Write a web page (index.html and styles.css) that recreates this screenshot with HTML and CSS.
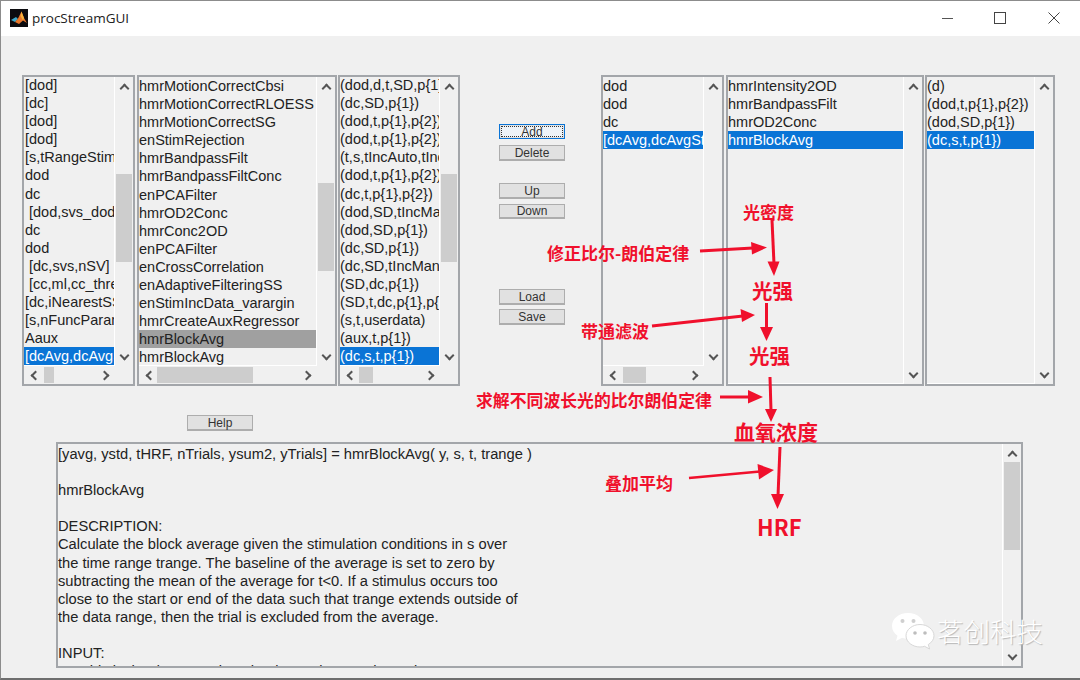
FILE: index.html
```html
<!DOCTYPE html>
<html lang="en">
<head>
    <meta charset="UTF-8">
    <title>procStreamGUI</title>
    <link rel="stylesheet" href="styles.css">
</head>
<body>
    <div class="window">
        <div class="titlebar">
            <svg class="app-icon" width="18" height="18" viewBox="0 0 18 18">
                <rect width="18" height="18" fill="#0b0b0f"/>
                <path d="M1 11 L6 8 L8 10 L5 13 Z" fill="#3fa7c9"/>
                <path d="M5 13 L8 9.5 L11.5 2.5 L14 9 L17 14 L13 11.5 L9 15 Z" fill="#e8762a"/>
                <path d="M11.5 2.5 L14 9 L13 11.5 L10.5 7 Z" fill="#f6b13c"/>
            </svg>
            <span class="title-text">procStreamGUI</span>
            <div class="window-controls">
                <span class="win-btn"><span class="win-min"></span></span>
                <span class="win-btn win-btn-mid"><span class="win-max"></span></span>
                <span class="win-btn">
                    <svg width="12" height="12" viewBox="0 0 12 12"><path d="M0.5 0.5 L11.5 11.5 M11.5 0.5 L0.5 11.5" stroke="#444" stroke-width="1" fill="none"/></svg>
                </span>
            </div>
        </div>

        <div class="content">
            <div class="top-row">
                <div class="listbox list-a">
                    <div class="items items-high">
                        <div>[dod]</div>
                        <div>[dc]</div>
                        <div>[dod]</div>
                        <div>[dod]</div>
                        <div>[s,tRangeStimReject]</div>
                        <div>dod</div>
                        <div>dc</div>
                        <div> [dod,svs_dod,nSV]</div>
                        <div>dc</div>
                        <div>dod</div>
                        <div> [dc,svs,nSV]</div>
                        <div> [cc,ml,cc_thresh]</div>
                        <div>[dc,iNearestSS]</div>
                        <div>[s,nFuncParam0]</div>
                        <div>Aaux</div>
                        <div class="selected">[dcAvg,dcAvgStd,tHRF]</div>
                    </div>
                    <div class="vscroll">
                        <span class="arrow-btn"><i class="arrow up"></i></span>
                        <div class="track"><div class="thumb thumb-a"></div></div>
                        <span class="arrow-btn"><i class="arrow down"></i></span>
                    </div>
                    <div class="hscroll">
                        <span class="arrow-btn"><i class="arrow left"></i></span>
                        <div class="track"><div class="thumb hthumb-a"></div></div>
                        <span class="arrow-btn"><i class="arrow right"></i></span>
                    </div>
                </div>

                <div class="listbox list-b">
                    <div class="items">
                        <div>hmrMotionCorrectCbsi</div>
                        <div>hmrMotionCorrectRLOESS</div>
                        <div>hmrMotionCorrectSG</div>
                        <div>enStimRejection</div>
                        <div>hmrBandpassFilt</div>
                        <div>hmrBandpassFiltConc</div>
                        <div>enPCAFilter</div>
                        <div>hmrOD2Conc</div>
                        <div>hmrConc2OD</div>
                        <div>enPCAFilter</div>
                        <div>enCrossCorrelation</div>
                        <div>enAdaptiveFilteringSS</div>
                        <div>enStimIncData_varargin</div>
                        <div>hmrCreateAuxRegressor</div>
                        <div class="inactive">hmrBlockAvg</div>
                        <div>hmrBlockAvg</div>
                    </div>
                    <div class="vscroll">
                        <span class="arrow-btn"><i class="arrow up"></i></span>
                        <div class="track"><div class="thumb thumb-b"></div></div>
                        <span class="arrow-btn"><i class="arrow down"></i></span>
                    </div>
                    <div class="hscroll">
                        <span class="arrow-btn"><i class="arrow left"></i></span>
                        <div class="track"><div class="thumb hthumb-b"></div></div>
                        <span class="arrow-btn"><i class="arrow right"></i></span>
                    </div>
                </div>

                <div class="listbox list-c">
                    <div class="items items-high">
                        <div>(dod,d,t,SD,p{1},p{2})</div>
                        <div>(dc,SD,p{1})</div>
                        <div>(dod,t,p{1},p{2})</div>
                        <div>(dod,t,p{1},p{2})</div>
                        <div>(t,s,tIncAuto,tIncMan)</div>
                        <div>(dod,t,p{1},p{2})</div>
                        <div>(dc,t,p{1},p{2})</div>
                        <div>(dod,SD,tIncMan,p{1})</div>
                        <div>(dod,SD,p{1})</div>
                        <div>(dc,SD,p{1})</div>
                        <div>(dc,SD,tIncMan,p{1})</div>
                        <div>(SD,dc,p{1})</div>
                        <div>(SD,t,dc,p{1},p{2})</div>
                        <div>(s,t,userdata)</div>
                        <div>(aux,t,p{1})</div>
                        <div class="selected">(dc,s,t,p{1})</div>
                    </div>
                    <div class="vscroll">
                        <span class="arrow-btn"><i class="arrow up"></i></span>
                        <div class="track"><div class="thumb thumb-a"></div></div>
                        <span class="arrow-btn"><i class="arrow down"></i></span>
                    </div>
                    <div class="hscroll">
                        <span class="arrow-btn"><i class="arrow left"></i></span>
                        <div class="track"><div class="thumb hthumb-c"></div></div>
                        <span class="arrow-btn"><i class="arrow right"></i></span>
                    </div>
                </div>

                <div class="button-col">
                    <button class="btn btn-add"><span>Add</span></button>
                    <button class="btn btn-delete">Delete</button>
                    <button class="btn btn-up">Up</button>
                    <button class="btn btn-down">Down</button>
                    <button class="btn btn-load">Load</button>
                    <button class="btn btn-save">Save</button>
                </div>

                <div class="listbox list-d">
                    <div class="items">
                        <div>dod</div>
                        <div>dod</div>
                        <div>dc</div>
                        <div class="selected">[dcAvg,dcAvgStd,tHRF]</div>
                    </div>
                    <div class="vscroll">
                        <span class="arrow-btn"><i class="arrow up"></i></span>
                        <div class="track"></div>
                        <span class="arrow-btn"><i class="arrow down"></i></span>
                    </div>
                    <div class="hscroll">
                        <span class="arrow-btn"><i class="arrow left"></i></span>
                        <div class="track"><div class="thumb hthumb-d"></div></div>
                        <span class="arrow-btn"><i class="arrow right"></i></span>
                    </div>
                </div>

                <div class="listbox list-e no-hscroll">
                    <div class="items">
                        <div>hmrIntensity2OD</div>
                        <div>hmrBandpassFilt</div>
                        <div>hmrOD2Conc</div>
                        <div class="selected">hmrBlockAvg</div>
                    </div>
                    <div class="vscroll">
                        <span class="arrow-btn"><i class="arrow up"></i></span>
                        <div class="track"></div>
                        <span class="arrow-btn"><i class="arrow down"></i></span>
                    </div>
                </div>

                <div class="listbox list-f no-hscroll">
                    <div class="items">
                        <div>(d)</div>
                        <div>(dod,t,p{1},p{2})</div>
                        <div>(dod,SD,p{1})</div>
                        <div class="selected">(dc,s,t,p{1})</div>
                    </div>
                    <div class="vscroll">
                        <span class="arrow-btn"><i class="arrow up"></i></span>
                        <div class="track"></div>
                        <span class="arrow-btn"><i class="arrow down"></i></span>
                    </div>
                </div>
            </div>

            <button class="btn btn-help">Help</button>

            <div class="helptext">
                <div class="helptext-body">[yavg, ystd, tHRF, nTrials, ysum2, yTrials] = hmrBlockAvg( y, s, t, trange )

hmrBlockAvg

DESCRIPTION:
Calculate the block average given the stimulation conditions in s over
the time range trange. The baseline of the average is set to zero by
subtracting the mean of the average for t&lt;0. If a stimulus occurs too
close to the start or end of the data such that trange extends outside of
the data range, then the trial is excluded from the average.

INPUT:
   y: this is the data wavelength #time points x #channels</div>
                <div class="vscroll">
                    <span class="arrow-btn"><i class="arrow up"></i></span>
                    <div class="track"><div class="thumb thumb-help"></div></div>
                    <span class="arrow-btn"><i class="arrow down"></i></span>
                </div>
            </div>
        </div>

        <!-- red notes pasted over the screenshot -->
        <svg class="arrows" width="1080" height="680" viewBox="0 0 1080 680">
            <g stroke="#f0102c" stroke-width="3" fill="#f0102c">
                <path d="M772 220 L774 264"/>
                <path d="M700 251 L753 248"/>
                <path d="M766.5 303 L766.5 329"/>
                <path d="M652 326 L743 316"/>
                <path d="M770 377 L771 411"/>
                <path d="M720 397 L750 397"/>
                <path d="M780 447 L778 496"/>
                <path d="M689 478 L760 471.5" stroke-width="2.5"/>
            </g>
            <g fill="#f0102c">
                <path d="M774 276 L767.5 261.5 L779.5 261.5 Z"/>
                <path d="M767 247.5 L751 242 L752 254.5 Z"/>
                <path d="M766.5 341 L760 327 L773 327 Z"/>
                <path d="M755 315 L740.5 309 L742 322 Z"/>
                <path d="M771 422 L765 409 L777 409 Z"/>
                <path d="M763 397 L748 390 L748 403.5 Z"/>
                <path d="M777.5 509 L771 494 L784 494 Z"/>
                <path d="M774 470 L757.5 464 L759 479.5 Z"/>
            </g>
        </svg>
        <span class="note note-s" id="note-od" lang="zh">光密度</span>
        <span class="note note-s" id="note-mbll" lang="zh">修正比尔-朗伯定律</span>
        <span class="note note-l" id="note-i1" lang="zh">光强</span>
        <span class="note note-s" id="note-bp" lang="zh">带通滤波</span>
        <span class="note note-l" id="note-i2" lang="zh">光强</span>
        <span class="note note-s" id="note-solve" lang="zh">求解不同波长光的比尔朗伯定律</span>
        <span class="note note-l" id="note-conc" lang="zh">血氧浓度</span>
        <span class="note note-s" id="note-avg" lang="zh">叠加平均</span>
        <span class="note note-l" id="note-hrf">HRF</span>

        <div class="watermark">
            <svg width="44" height="38" viewBox="0 0 44 38">
                <path d="M17 1 C7.5 1 1 7 1 14 C1 18 3.2 21.5 6.5 23.8 L5 29 L11 25.8 C13 26.4 15 26.7 17 26.7 C26.5 26.7 33 20.8 33 14 C33 7 26.5 1 17 1 Z" fill="#fff"/>
                <path d="M29 12.5 C21.5 12.5 15 17.6 15 23.8 C15 30 21.5 35 29 35 C30.6 35 32.2 34.7 33.6 34.3 L38.6 37 L37.3 32.5 C40.8 30.4 43 27.3 43 23.8 C43 17.6 36.5 12.5 29 12.5 Z" fill="#fff" stroke="#d8d8d8" stroke-width="1"/>
                <circle cx="11.5" cy="9" r="2" fill="#cfcfcf"/>
                <circle cx="22.5" cy="9" r="2" fill="#cfcfcf"/>
                <circle cx="24" cy="21" r="1.8" fill="#bdbdbd"/>
                <circle cx="34" cy="21" r="1.8" fill="#bdbdbd"/>
            </svg>
            <span class="watermark-text" lang="zh">茗创科技</span>
        </div>
    </div>
</body>
</html>
```

FILE: styles.css
```css
* {
    box-sizing: border-box;
}
body {
    margin: 0;
    background-color: #f0f0f0;
    font-family: 'Liberation Sans', Arial, sans-serif;
}
.window {
    position: relative;
    width: 1080px;
    height: 680px;
    overflow: hidden;
    display: flex;
    flex-direction: column;
    background-color: #f0f0f0;
    border-top: 1px solid #8c8c8c;
    border-left: 1px solid #8c8c8c;
    border-bottom: 2px solid #6e6e6e;
}

/* title bar */
.titlebar {
    height: 35px;
    flex: none;
    display: flex;
    align-items: center;
    background-color: #fff;
    padding: 0 0 1px 9px;
}
.app-icon {
    flex: none;
}
.title-text {
    margin-left: 4px;
    font-family: 'Open Sans', 'Noto Sans', sans-serif;
    font-size: 13.5px;
    color: #222;
}
.window-controls {
    margin-left: auto;
    display: flex;
}
.win-btn {
    width: 52px;
    height: 34px;
    display: flex;
    align-items: center;
    justify-content: center;
}
.win-btn-mid {
    margin-right: 2.5px;
}
.win-min {
    width: 11px;
    height: 1px;
    background-color: #555;
}
.win-max {
    width: 12px;
    height: 12px;
    border: 1px solid #444;
}

/* page content */
.content {
    flex: 1;
    padding: 39px 0 0 21px;
}
.top-row {
    display: flex;
    height: 311px;
}

/* list boxes */
.listbox {
    display: grid;
    grid-template-columns: 1fr 18px;
    grid-template-rows: 1fr 18px;
    border: 2px solid #a3a6aa;
    font-size: 14.5px;
    color: #222;
}
.no-hscroll {
    grid-template-rows: 1fr;
}
.list-a { width: 113px; margin-right: 2px; }
.list-b { width: 200px; margin-right: 1px; }
.list-c { width: 122px; }
.list-d { width: 123px; margin-right: 2px; }
.list-e { width: 198px; margin-right: 1px; }
.list-f { width: 130px; }
.items {
    overflow: hidden;
    min-width: 0;
    border-right: 1px solid #fff;
    border-bottom: 1px solid #fff;
}
.items div {
    height: 18.1px;
    line-height: 18px;
    white-space: pre;
}
.list-a .items div {
    padding-left: 1px;
}
.items-high div:first-child {
    margin-top: -1px;
}
.selected {
    background-color: #0a74d6;
    color: #fff;
}
.items .inactive {
    background-color: #a0a0a0;
}

/* scroll bars */
.vscroll {
    display: flex;
    flex-direction: column;
    min-height: 0;
    overflow: hidden;
}
.hscroll {
    display: flex;
    min-width: 0;
}
.track {
    flex: 1;
    padding: 0 1px;
}
.hscroll .track {
    padding: 1px 0;
}
.arrow-btn {
    flex: none;
    width: 18px;
    height: 18px;
    display: flex;
    align-items: center;
    justify-content: center;
}
.arrow {
    display: block;
    width: 7px;
    height: 7px;
    border-top: 2px solid #555;
    border-left: 2px solid #555;
}
.arrow.up { transform: translateY(2px) rotate(45deg); }
.arrow.down { transform: translateY(-2px) rotate(225deg); }
.arrow.left { transform: translateX(2px) rotate(-45deg); }
.arrow.right { transform: translateX(-2px) rotate(135deg); }
.thumb {
    background-color: #cdcdcd;
}
.thumb-a { height: 88px; margin-top: 79px; }
.thumb-b { height: 88px; margin-top: 88px; }
.hscroll .thumb { height: 16px; }
.hthumb-a { width: 10px; margin-left: 2px; }
.hthumb-b { width: 96px; }
.hthumb-c { width: 14px; margin-left: 1px; }
.hthumb-d { width: 23px; margin-left: 2px; }
.thumb-help { height: 88px; margin-top: 0; }

/* push buttons */
.button-col {
    width: 67px;
    margin: 0 35px 0 39px;
    display: flex;
    flex-direction: column;
    padding-top: 49px;
}
.btn {
    display: block;
    width: 66px;
    height: 16px;
    padding: 1px 0 0;
    background-color: #e1e1e1;
    border: 1px solid #adadad;
    border-bottom-width: 2px;
    font-family: 'Liberation Sans', Arial, sans-serif;
    font-size: 12px;
    line-height: 13px;
    color: #333;
}
.btn-add {
    height: 15px;
    border: 1px solid #0a74d6;
    padding: 1px;
}
.btn-add span {
    display: block;
    height: 11px;
    line-height: 10px;
    border: 1px dotted #333;
    background-color: #eef3f8;
}
.btn-delete { margin-top: 6px; }
.btn-up { margin-top: 22px; }
.btn-down { margin-top: 5px; height: 15px; padding-top: 0; }
.btn-load { margin-top: 70px; }
.btn-save { margin-top: 4px; }
.btn-help {
    margin: 29px 0 0 165px;
}

/* help text */
.helptext {
    margin: 11px 0 0 34px;
    width: 967px;
    height: 226px;
    display: flex;
    border: 2px solid #a3a6aa;
}
.helptext-body {
    flex: 1;
    overflow: hidden;
    padding: 1px 0 0;
    font-size: 14.7px;
    line-height: 18.1px;
    color: #222;
    white-space: pre;
    border-right: 1px solid #fff;
}

/* red notes */
.arrows {
    position: absolute;
    left: -1px;
    top: -1px;
}
.note {
    position: absolute;
    font-family: 'Noto Sans CJK SC', sans-serif;
    font-weight: 700;
    color: #f0102c;
    line-height: 1;
    white-space: nowrap;
}
.note-s { font-size: 17px; }
.note-l { font-size: 20.5px; }
#note-od { left: 742px; top: 202px; }
#note-mbll { left: 546px; top: 243px; }
#note-i1 { left: 751px; top: 279px; }
#note-bp { left: 580px; top: 321px; }
#note-i2 { left: 748px; top: 344px; }
#note-solve { left: 475px; top: 391px; font-size: 16.85px; }
#note-conc { left: 733px; top: 420px; font-size: 21px; }
#note-avg { left: 604px; top: 473px; }
#note-hrf { left: 756px; top: 514px; font-size: 22px; }

/* watermark */
.watermark {
    position: absolute;
    left: 890px;
    top: 611px;
    display: flex;
    align-items: center;
}
.watermark-text {
    margin-left: 2px;
    font-family: 'Noto Sans CJK SC', sans-serif;
    font-weight: 300;
    font-size: 26.5px;
    line-height: 1;
    color: #fff;
    text-shadow: 1px 1px 1px #b5b5b5;
}
```
